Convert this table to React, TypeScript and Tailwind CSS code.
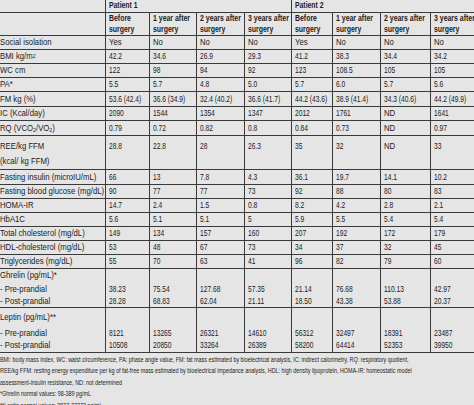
import React from "react";

const P = [
  ["Social isolation", ["Yes", "No", "No", "No", "Yes", "No", "No", "No"]],
  ["BMI kg/m2", ["42.2", "34.6", "26.9", "29.3", "41.2", "38.3", "34.4", "34.2"]],
  ["WC cm", ["122", "98", "94", "92", "123", "108.5", "105", "105"]],
  ["PA*", ["5.5", "5.7", "4.8", "5.0", "5.7", "6.0", "5.7", "5.6"]],
  ["FM kg (%)", ["53.6 (42.4)", "36.6 (34.9)", "32.4 (40.2)", "36.6 (41.7)", "44.2 (43.6)", "38.9 (41.4)", "34.3 (40.6)", "44.2 (49.9)"]],
  ["IC (Kcal/day)", ["2090", "1544", "1354", "1347", "2012", "1761", "ND", "1641"]],
  ["RQ", ["0.79", "0.72", "0.82", "0.8", "0.84", "0.73", "ND", "0.97"]],
] as [string, string[]][];

const Q = [
  ["Fasting insulin (microIU/mL)", ["66", "13", "7.8", "4.3", "36.1", "19.7", "14.1", "10.2"]],
  ["Fasting blood glucose (mg/dL)", ["90", "77", "77", "73", "92", "88", "80", "83"]],
  ["HOMA-IR", ["14.7", "2.4", "1.5", "0.8", "8.2", "4.2", "2.8", "2.1"]],
  ["HbA1C", ["5.6", "5.1", "5.1", "5", "5.9", "5.5", "5.4", "5.4"]],
  ["Total cholesterol (mg/dL)", ["149", "134", "157", "160", "207", "192", "172", "179"]],
  ["HDL-cholesterol (mg/dL)", ["53", "48", "67", "73", "34", "37", "32", "45"]],
  ["Triglycerides (mg/dL)", ["55", "70", "63", "41", "96", "82", "79", "60"]],
] as [string, string[]][];

const ghrelin = {
  pre: ["38.23", "75.54", "127.68", "57.35", "21.14", "76.68", "110.13", "42.97"],
  post: ["28.28", "68.83", "62.04", "21.11", "18.50", "43.38", "53.88", "20.37"],
};
const leptin = {
  pre: ["8121", "13265", "26321", "14610", "56312", "32497", "18391", "23487"],
  post: ["10508", "20850", "33264", "26389", "58200", "64414", "52353", "39950"],
};

const widths = [105, 44, 47, 48, 47, 41, 48, 50, 48];
const B = "border-[#3a3a3a]";

function L({ children }: { children: React.ReactNode }) {
  return <span className="inline-block origin-left scale-x-[0.86] whitespace-nowrap">{children}</span>;
}
function N({ children }: { children: React.ReactNode }) {
  return <span className="inline-block origin-left scale-x-[0.74] whitespace-nowrap">{children}</span>;
}

function Label({ name }: { name: string }) {
  if (name === "BMI kg/m2")
    return (
      <L>
        BMI kg/m<sup className="text-[6px] relative -top-[1px]">2</sup>
      </L>
    );
  if (name === "RQ")
    return (
      <L>
        RQ (VCO<sub className="text-[6px]">2</sub>/VO<sub className="text-[6px]">2</sub>)
      </L>
    );
  return <L>{name}</L>;
}

function Row({ name, vals, h }: { name: string; vals: string[]; h: string }) {
  return (
    <tr className={h}>
      <td className={`border-r border-b ${B} pl-0 whitespace-nowrap`}>
        <Label name={name} />
      </td>
      {vals.map((v, i) => (
        <td key={i} className={`border-r border-b ${B} pl-[3px] whitespace-nowrap`}>
          {/^[A-Za-z]+$/.test(v) ? <L>{v}</L> : <N>{v}</N>}
        </td>
      ))}
    </tr>
  );
}

function BlockRow({
  label,
  vals,
  h,
  last,
}: {
  label: string;
  vals: string[] | null;
  h: string;
  last: boolean;
}) {
  const bb = last ? `border-b-[1.5px] ${B}` : "border-b-0";
  return (
    <tr className={h}>
      <td className={`border-r ${bb} ${B} pl-0 whitespace-nowrap`}>
        <L>{label}</L>
      </td>
      {Array.from({ length: 8 }).map((_, i) => (
        <td key={i} className={`border-r ${bb} ${B} pl-[3px] whitespace-nowrap`}>
          {vals ? <N>{vals[i]}</N> : ""}
        </td>
      ))}
    </tr>
  );
}

const heads = ["1 year after", "2 years after", "3 years after"];

export default function App() {
  return (
    <div
      className="w-[474px] h-[405px] overflow-hidden bg-[#e5e5e5] text-[#1c1c1c]"
      style={{ fontFamily: '"Liberation Sans", Arial, sans-serif' }}
    >
      <table className="table-fixed border-collapse w-[478px] text-[9px] leading-[10px]">
        <colgroup>
          {widths.map((w, i) => (
            <col key={i} style={{ width: w }} />
          ))}
        </colgroup>
        <tbody>
          <tr className="h-[12px]">
            <td className={`border-r border-b ${B}`}></td>
            <td colSpan={4} className={`border-r border-b ${B} pl-[3px] font-bold align-top`}>
              <span className="inline-block origin-left scale-x-[0.76] whitespace-nowrap">Patient 1</span>
            </td>
            <td colSpan={4} className={`border-b ${B} pl-[3px] font-bold align-top`}>
              <span className="inline-block origin-left scale-x-[0.76] whitespace-nowrap">Patient 2</span>
            </td>
          </tr>
          <tr className="h-[23px]">
            <td className={`border-r border-b-[1.5px] ${B}`}></td>
            {[0, 1].map((p) =>
              ["Before", ...heads].map((t, i) => (
                <td
                  key={p + "-" + i}
                  className={`border-r border-b-[1.5px] ${B} pl-[3px] font-bold leading-[10.5px] whitespace-nowrap`}
                >
                  <span className="inline-block origin-left scale-x-[0.77] whitespace-nowrap">
                    {t}
                    <br />
                    surgery
                  </span>
                </td>
              ))
            )}
          </tr>
          {P.map(([n, v], i) => (
            <Row key={n} name={n} vals={v} h={i === 4 || i === 6 ? "h-[15px]" : "h-[14px]"} />
          ))}
          <tr className="h-[33px]">
            <td className={`border-r border-b ${B} pl-0 align-top pt-[3px] leading-[15px] whitespace-nowrap`}>
              <L>
                REE/kg FFM
                <br />
                (kcal/ kg FFM)
              </L>
            </td>
            {["28.8", "22.8", "28", "26.3", "35", "32", "ND", "33"].map((v, i) => (
              <td key={i} className={`border-r border-b ${B} pl-[3px] align-top pt-[3px] leading-[15px]`}>
                {v === "ND" ? <L>{v}</L> : <N>{v}</N>}
              </td>
            ))}
          </tr>
          {Q.map(([n, v], i) => (
            <Row key={n} name={n} vals={v} h={i === 0 ? "h-[15px]" : "h-[14px]"} />
          ))}
          <BlockRow label="Ghrelin (pg/mL)*" vals={null} h="h-[13px]" last={false} />
          <BlockRow label="- Pre-prandial" vals={ghrelin.pre} h="h-[15px]" last={false} />
          <BlockRow label="- Post-prandial" vals={ghrelin.post} h="h-[11px]" last={true} />
          <BlockRow label="Leptin (pg/mL)**" vals={null} h="h-[20px]" last={false} />
          <BlockRow label="- Pre-prandial" vals={leptin.pre} h="h-[12px]" last={false} />
          <BlockRow label="- Post-prandial" vals={leptin.post} h="h-[13px]" last={true} />
        </tbody>
      </table>
      <div className="text-[6.6px] leading-[11.5px] pt-[1px] whitespace-nowrap">
        <div className="origin-left scale-x-[0.82]">
          BMI: body mass index, WC: waist circumference, PA: phase angle value, FM: fat mass estimated by bioelectrical
          analysis, IC: indirect calorimetry, RQ: respiratory quotient,
        </div>
        <div className="origin-left scale-x-[0.82]">
          REE/kg FFM: resting energy expenditure per kg of fat-free mass estimated by bioelectrical impedance analysis,
          HDL: high density lipoprotein, HOMA-IR: homeostatic model
        </div>
        <div className="origin-left scale-x-[0.82]">assessment-insulin resistance, ND: not determined</div>
        <div className="origin-left scale-x-[0.82]">*Ghrelin normal values: 98-389 pg/mL</div>
        <div className="origin-left scale-x-[0.82]">**Leptin normal values: 3877-77273 pg/mL</div>
      </div>
    </div>
  );
}
